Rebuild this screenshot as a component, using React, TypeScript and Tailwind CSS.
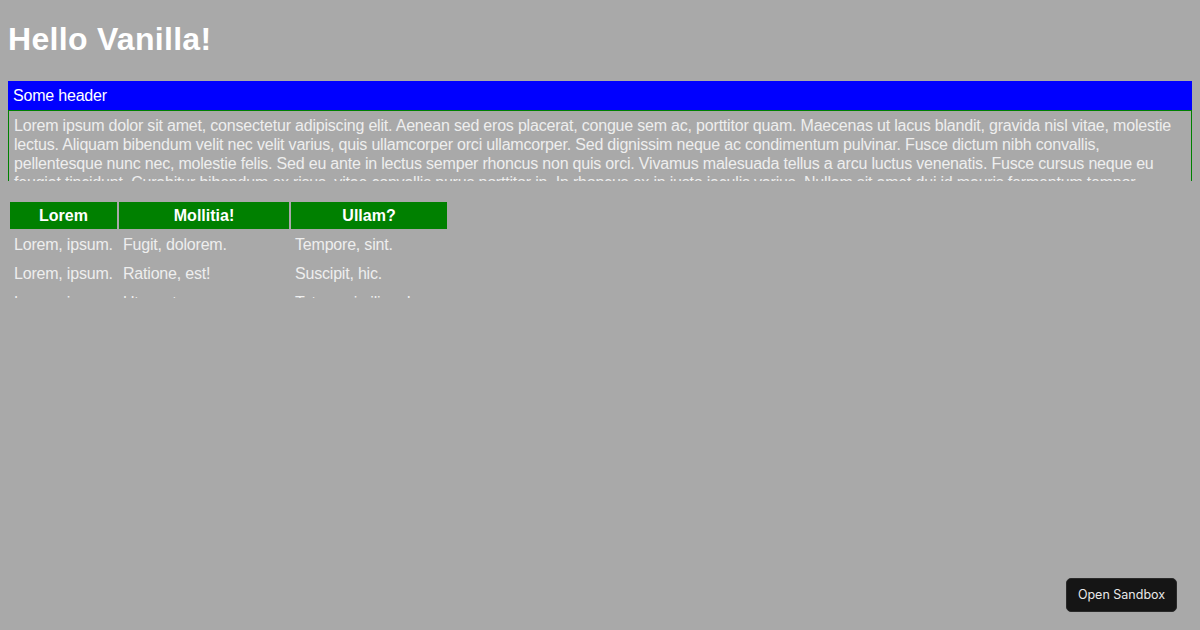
const lorem =
  'Lorem ipsum dolor sit amet, consectetur adipiscing elit. Aenean sed eros placerat, congue sem ac, porttitor quam. Maecenas ut lacus blandit, gravida nisl vitae, molestie lectus. Aliquam bibendum velit nec velit varius, quis ullamcorper orci ullamcorper. Sed dignissim neque ac condimentum pulvinar. Fusce dictum nibh convallis, pellentesque nunc nec, molestie felis. Sed eu ante in lectus semper rhoncus non quis orci. Vivamus malesuada tellus a arcu luctus venenatis. Fusce cursus neque eu feugiat tincidunt. Curabitur bibendum ex risus, vitae convallis purus porttitor in. In rhoncus ex in justo iaculis varius. Nullam sit amet dui id mauris fermentum tempor. Donec vitae mi at nisl tempus laoreet.'

const rows = [
  ['Lorem, ipsum.', 'Fugit, dolorem.', 'Tempore, sint.'],
  ['Lorem, ipsum.', 'Ratione, est!', 'Suscipit, hic.'],
  ['Lorem, ipsum.', 'Ut, sunt.', 'Totam, similique!'],
]

export default function App() {
  return (
    <div className="min-h-[630px] bg-[#a9a9a9] p-2 font-['Liberation_Sans',Arial,sans-serif] text-[16px] text-[#eeeeee]">
      <h1 className="mt-[13px] mb-[23px] text-[32px] font-bold leading-[37px] tracking-[0.3px] text-white">Hello Vanilla!</h1>

      {/* header + clipped text box */}
      <div className="h-[100px] overflow-hidden tracking-[-0.2px]">
        <div className="bg-[#0000ff] px-[5px] py-[5px] leading-[19px] text-white">Some header</div>
        <div className="border border-[#008000] p-[5px] leading-[19px]">{lorem}</div>
      </div>

      {/* table, also clipped */}
      <div className="mt-[19px] h-[98px] overflow-hidden">
        <table className="border-separate border-spacing-[2px]">
          <thead>
            <tr>
              <th className="w-[107px] h-[27px] bg-[#008000] px-[4px] text-center font-bold text-white">Lorem</th>
              <th className="w-[170px] h-[27px] bg-[#008000] px-[4px] text-center font-bold text-white">Mollitia!</th>
              <th className="w-[156px] h-[27px] bg-[#008000] px-[4px] text-center font-bold text-white">Ullam?</th>
            </tr>
          </thead>
          <tbody>
            {rows.map((r, i) => (
              <tr key={i}>
                {r.map((c, j) => (
                  <td key={j} className="h-[27px] px-[4px] text-left align-middle whitespace-nowrap tracking-[-0.2px]">
                    {c}
                  </td>
                ))}
              </tr>
            ))}
          </tbody>
        </table>
      </div>

      <button className="fixed right-[23px] bottom-[18px] h-[34px] w-[111px] rounded-[5px] border border-[#2a2a2a] bg-[#151515] font-['Inter',sans-serif] text-[12.5px] text-[#e8e8e8]">
        Open Sandbox
      </button>
    </div>
  )
}
